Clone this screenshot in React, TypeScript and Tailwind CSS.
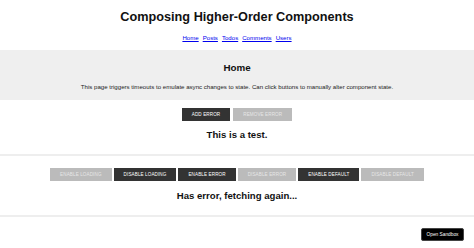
import React from "react";

const dark = "bg-[#333333] text-white";
const light = "bg-[#bbbbbb] text-[#e6e6e6]";

function Btn({ label, on }: { label: string; on: boolean }) {
  return (
    <button
      className={`h-[13px] px-[10px] text-[4.6px] leading-[13px] uppercase tracking-[0.1px] ${on ? dark : light}`}
    >
      {label}
    </button>
  );
}

export default function App() {
  const links = ["Home", "Posts", "Todos", "Comments", "Users"];
  const toggles = [
    { label: "Enable Loading", on: false },
    { label: "Disable Loading", on: true },
    { label: "Enable Error", on: true },
    { label: "Disable Error", on: false },
    { label: "Enable Default", on: true },
    { label: "Disable Default", on: false },
  ];

  return (
    <div className="relative w-[474px] h-[248px] overflow-hidden bg-white text-[#111] font-['Liberation_Sans',Arial,sans-serif]">
      <h1 className="pt-[10px] text-center text-[12.7px] leading-[14px] font-bold">
        Composing Higher-Order Components
      </h1>
      <nav className="mt-[10px] flex justify-center gap-[4px] text-[6.1px] leading-[8px]">
        {links.map((l) => (
          <a key={l} href="#" className="text-[#0000ee] underline">
            {l}
          </a>
        ))}
      </nav>

      <section className="mt-[8px] h-[50px] bg-[#efefef] pt-[13px] text-center">
        <h2 className="text-[9.8px] leading-[10px] font-bold">Home</h2>
        <p className="mt-[10px] text-[6.1px] leading-[7px] text-[#222]">
          This page triggers timeouts to emulate async changes to state. Can click buttons to manually alter component state.
        </p>
      </section>

      <div className="mt-[8px] flex justify-center gap-[3px]">
        <Btn label="Add Error" on={true} />
        <Btn label="Remove Error" on={false} />
      </div>
      <p className="mt-[8px] text-center text-[9.6px] leading-[12px] font-bold">This is a test.</p>

      <div className="mt-[13px] h-[2px] bg-[#eeeeee]" />

      <div className="mt-[12px] flex justify-center gap-[2px]">
        {toggles.map((t) => (
          <Btn key={t.label} label={t.label} on={t.on} />
        ))}
      </div>
      <p className="mt-[9px] text-center text-[9.6px] leading-[12px] font-bold">Has error, fetching again...</p>

      <div className="mt-[13px] h-[2px] bg-[#eeeeee]" />

      <button className="absolute right-[10px] bottom-[7px] h-[13px] w-[43px] rounded-[2px] border border-[#444] bg-black text-[4.8px] leading-[11px] text-white">
        Open Sandbox
      </button>
    </div>
  );
}
